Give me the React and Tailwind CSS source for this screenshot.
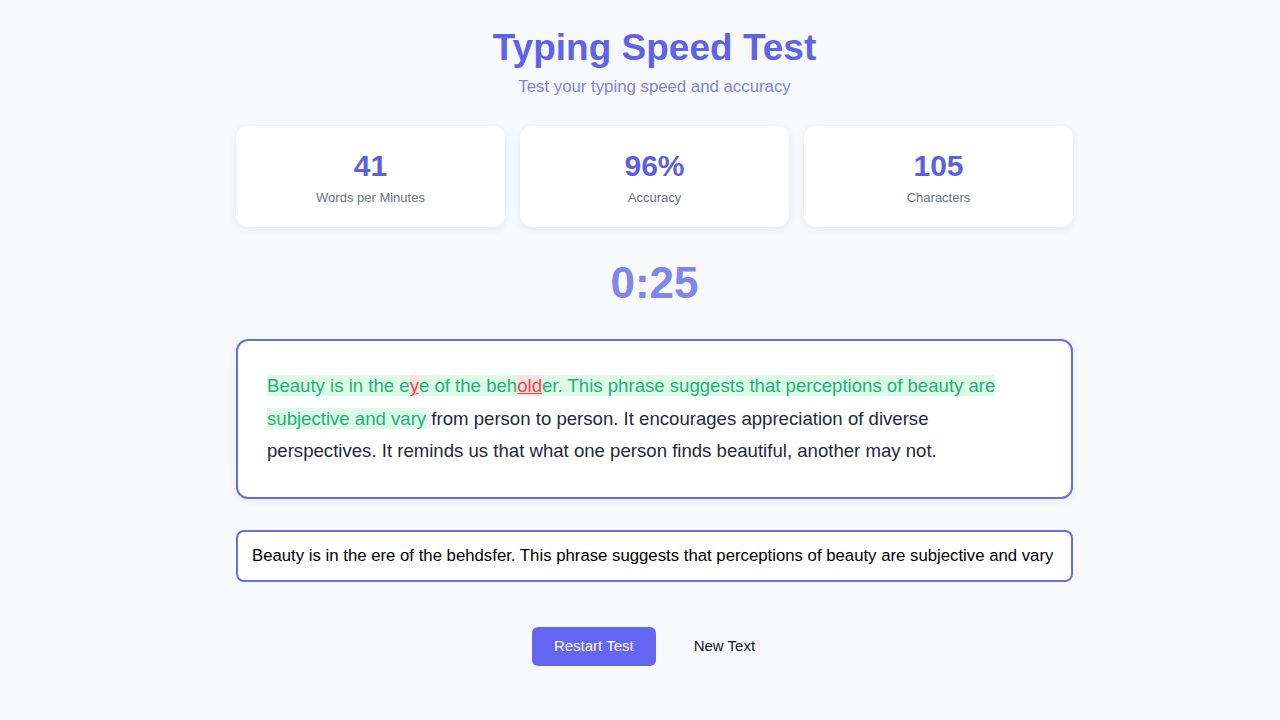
import React from "react";

const target =
  "Beauty is in the eye of the beholder. This phrase suggests that perceptions of beauty are subjective and vary from person to person. It encourages appreciation of diverse perspectives. It reminds us that what one person finds beautiful, another may not.";
const typed =
  "Beauty is in the ere of the behdsfer. This phrase suggests that perceptions of beauty are subjective and vary";

function segments() {
  const segs = [];
  for (let i = 0; i < target.length; i++) {
    let kind;
    if (i < typed.length) kind = typed[i] === target[i] ? "ok" : "bad";
    else if (i === typed.length) kind = "cur";
    else kind = "rest";
    const last = segs[segs.length - 1];
    if (last && last.kind === kind) last.text += target[i];
    else segs.push({ kind, text: target[i] });
  }
  return segs;
}

function Stat({ value, label }) {
  return (
    <div className="bg-white rounded-xl shadow-[0_2px_8px_rgba(0,0,0,0.08)] flex flex-col items-center pt-[22px] pb-[19px]">
      <div className="text-[30px] leading-[36px] font-bold text-[#5b5fe0]">{value}</div>
      <div className="mt-[4px] text-[13px] leading-[20px] text-[#6b7280]">{label}</div>
    </div>
  );
}

export default function App() {
  const segs = segments();
  return (
    <div
      className="min-h-[720px] bg-[#f8f9fb] pt-[28px]"
      style={{ fontFamily: '"Liberation Sans", Arial, sans-serif' }}
    >
      <div className="ml-[236px] w-[837px] flex flex-col">
        <h1 className="text-center text-[37px] leading-[40px] font-bold text-[#5f63e6]">
          Typing Speed Test
        </h1>
        <p className="mt-[7px] text-center text-[16.8px] leading-[24px] text-[#7c83ea]">
          Test your typing speed and accuracy
        </p>

        <div className="mt-[27px] grid grid-cols-3 gap-[15px]">
          <Stat value="41" label="Words per Minutes" />
          <Stat value="96%" label="Accuracy" />
          <Stat value="105" label="Characters" />
        </div>

        <div className="mt-[34px] text-center text-[44px] leading-[44px] font-bold text-[#7f86ec]">
          0:25
        </div>

        <div className="mt-[34px] bg-white border-2 border-[#6a6de0] rounded-xl p-[29px] shadow-[0_2px_8px_rgba(0,0,0,0.06)]">
          <p className="text-[18.6px] leading-[32.5px] text-[#1f2937]">
            {segs.map((s, i) => {
              if (s.kind === "ok")
                return (
                  <span key={i} className="bg-[#dcfce7] text-[#22b07d]">
                    {s.text}
                  </span>
                );
              if (s.kind === "bad")
                return (
                  <span key={i} className="bg-[#fde2e2] text-[#e5484d] underline">
                    {s.text}
                  </span>
                );
              if (s.kind === "cur")
                return (
                  <span key={i} className="bg-[#eef2ff]">
                    {s.text}
                  </span>
                );
              return <span key={i}>{s.text}</span>;
            })}
          </p>
        </div>

        <div className="mt-[31px] h-[52px] bg-white border-2 border-[#6a6de0] rounded-lg px-[14px] flex items-center">
          <span className="text-[16.75px] text-black whitespace-nowrap overflow-hidden">{typed}</span>
        </div>

        <div className="mt-[45px] flex justify-center gap-[16px]">
          <button className="h-[39px] px-[22px] rounded-md bg-[#6366f1] text-white text-[15px]">
            Restart Test
          </button>
          <button className="h-[39px] px-[22px] rounded-md text-[#111827] text-[15px]">
            New Text
          </button>
        </div>
      </div>
    </div>
  );
}
